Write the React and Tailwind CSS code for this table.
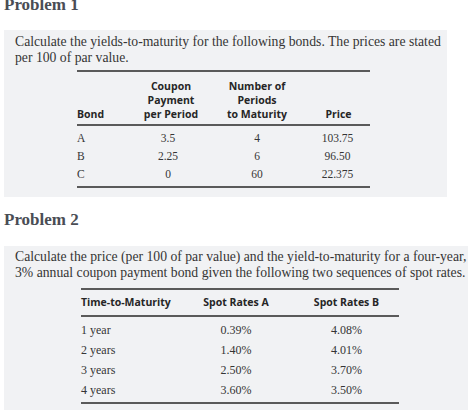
export default function App() {
  const serif = { fontFamily: '"Liberation Serif", "Times New Roman", serif' };
  const sans = { fontFamily: '"Open Sans", Lato, sans-serif' };
  return (
    <div className="w-[468px] h-[410px] bg-white overflow-hidden text-[#353535]" style={serif}>
      <div className="-mt-[5px] pl-[4px] h-[20px] leading-[20px] text-[17px] font-bold text-[#4a4d55] whitespace-nowrap">
        Problem 1
      </div>
      <div className="mt-[15px] ml-[4px] w-[443px] h-[167px] bg-[#f1f2f4] pt-[4px]">
        <div className="pl-[11px] text-[13.7px] leading-[16px] whitespace-nowrap">
          Calculate the yields-to-maturity for the following bonds. The prices are stated
          <br />
          per 100 of par value.
        </div>
        <div className="mt-[4px] ml-[73px] w-[293px]">
          <div className="h-[2px] bg-[#5a5a5a]" />
          <div className="grid grid-cols-[58px_72px_100px_63px] pt-[7px] pb-[3px] text-[10.5px] leading-[14px] font-bold text-[#262626]" style={sans}>
            <div className="flex items-end">Bond</div>
            <div className="text-center">Coupon<br />Payment<br />per Period</div>
            <div className="text-center">Number of<br />Periods<br />to Maturity</div>
            <div className="flex items-end justify-center">Price</div>
          </div>
          <div className="h-[2px] bg-[#5a5a5a]" />
          <div className="pt-[3px] pb-[3px] text-[11.5px] leading-[18px]">
            {[
              ["A", "3.5", "4", "103.75"],
              ["B", "2.25", "6", "96.50"],
              ["C", "0", "60", "22.375"],
            ].map((r) => (
              <div key={r[0]} className="grid grid-cols-[58px_72px_100px_63px]">
                <div>{r[0]}</div>
                <div className="text-center pr-[6px]">{r[1]}</div>
                <div className="text-center">{r[2]}</div>
                <div className="text-center pr-[2px]">{r[3]}</div>
              </div>
            ))}
          </div>
          <div className="h-[2px] bg-[#5a5a5a]" />
        </div>
      </div>
      <div className="mt-[13px] pl-[4px] h-[20px] leading-[20px] text-[17px] font-bold text-[#4a4d55] whitespace-nowrap">
        Problem 2
      </div>
      <div className="mt-[16px] ml-[4px] w-[464px] h-[164px] bg-[#f1f2f4] pt-[3px]">
        <div className="pl-[11px] text-[13.7px] leading-[16px] whitespace-nowrap">
          Calculate the price (per 100 of par value) and the yield-to-maturity for a four-year,
          <br />
          3% annual coupon payment bond given the following two sequences of spot rates.
        </div>
        <div className="mt-[7px] ml-[77px] w-[318px]">
          <div className="h-[2px] bg-[#5a5a5a]" />
          <div className="grid grid-cols-[111px_88px_119px] pt-[5px] pb-[6px] text-[10.5px] leading-[14px] font-bold text-[#262626]" style={sans}>
            <div>Time-to-Maturity</div>
            <div className="text-center">Spot Rates A</div>
            <div className="text-center pl-[14px]">Spot Rates B</div>
          </div>
          <div className="h-[2px] bg-[#5a5a5a]" />
          <div className="pt-[3px] pb-[2px] text-[12px] leading-[20px]">
            {[
              ["1 year", "0.39%", "4.08%"],
              ["2 years", "1.40%", "4.01%"],
              ["3 years", "2.50%", "3.70%"],
              ["4 years", "3.60%", "3.50%"],
            ].map((r) => (
              <div key={r[0]} className="grid grid-cols-[111px_88px_119px]">
                <div>{r[0]}</div>
                <div className="text-center">{r[1]}</div>
                <div className="text-center pl-[14px]">{r[2]}</div>
              </div>
            ))}
          </div>
          <div className="h-[2px] bg-[#5a5a5a]" />
        </div>
      </div>
    </div>
  );
}
